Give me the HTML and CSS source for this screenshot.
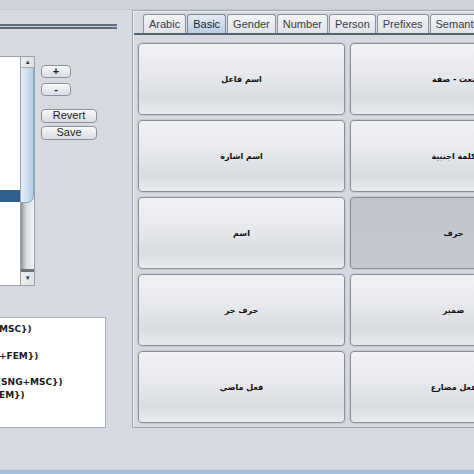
FILE: index.html
```html
<!DOCTYPE html>
<html>
<head>
<meta charset="utf-8">
<link rel="stylesheet" href="styles.css">
</head>
<body>
<div class="window">
  <div class="topband"></div>
  <div class="main">
    <div class="left">
      <div class="sep"></div>
      <div class="listrow">
        <div class="listbox">
          <div class="items"><div class="sel"></div></div>
          <div class="scroll">
            <div class="arrow up">&#9650;</div>
            <div class="thumb"></div>
            <div class="track"></div>
            <div class="arrow down">&#9660;</div>
          </div>
        </div>
        <div class="btncol">
          <div class="sbtn small">+</div>
          <div class="sbtn small gap1">-</div>
          <div class="sbtn wide gap2">Revert</div>
          <div class="sbtn wide gap3">Save</div>
        </div>
      </div>
      <div class="textarea">
        <div class="tline">MSC})</div>
        <div class="tline"></div>
        <div class="tline">+FEM})</div>
        <div class="tline"></div>
        <div class="tline shift">(SNG+MSC})</div>
        <div class="tline">EM})</div>
      </div>
    </div>
    <div class="frame">
      <div class="tabs">
        <div class="tab">Arabic</div>
        <div class="tab active">Basic</div>
        <div class="tab">Gender</div>
        <div class="tab">Number</div>
        <div class="tab">Person</div>
        <div class="tab">Prefixes</div>
        <div class="tab">Semantic</div>
      </div>
      <div class="tabline"></div>
      <div class="grid">
        <div class="key">اسم فاعل</div>
        <div class="key">نعت - صفة</div>
        <div class="key">اسم اشارة</div>
        <div class="key">كلمة اجنبية</div>
        <div class="key">اسم</div>
        <div class="key pressed">حرف</div>
        <div class="key">حرف جر</div>
        <div class="key">ضمير</div>
        <div class="key">فعل ماضي</div>
        <div class="key">فعل مضارع</div>
      </div>
    </div>
  </div>
  <div class="statusbar"></div>
</div>
</body>
</html>
```
FILE: styles.css
```css
html, body {
  margin: 0;
  padding: 0;
}
body {
  width: 474px;
  height: 474px;
  overflow: hidden;
  background: #d6d9e0;
  font-family: "Liberation Sans", Arial, sans-serif;
}
.window {
  display: flex;
  flex-direction: column;
  height: 474px;
}
.topband {
  height: 9px;
  flex: none;
  background: #cdd1d8;
  border-bottom: 1px solid #c5c9d0;
}
.main {
  flex: 1;
  min-height: 0;
  display: flex;
}
.statusbar {
  flex: none;
  height: 4px;
  background: #a8c1d9;
  border-top: 1px solid #c4d5e5;
}
.left {
  flex: none;
  width: 132px;
  display: flex;
  flex-direction: column;
}
.sep {
  margin-top: 14px;
  width: 117px;
  height: 1px;
  border-top: 2px solid #5f6b7a;
  border-bottom: 2px solid #5f6b7a;
  background: #c9ced6;
}
.listrow {
  margin-top: 27px;
  display: flex;
  height: 230px;
}
.listbox {
  width: 35px;
  display: flex;
  background: #ffffff;
  border: 1px solid #9ba1a9;
  border-left: none;
  box-sizing: border-box;
}
.items {
  width: 21px;
  padding-top: 133px;
}
.sel {
  height: 12px;
  background: #2e5f8d;
}
.scroll {
  width: 13px;
  display: flex;
  flex-direction: column;
  border-left: 1px solid #9ba1a9;
  background: linear-gradient(to right, #8e9297, #d9dbde 40%, #f4f5f6);
}
.arrow {
  font-size: 6px;
  color: #333;
  text-align: center;
  background: linear-gradient(to right, #eceef0, #dfe2e6);
}
.arrow.up {
  height: 10px;
  line-height: 10px;
  border-bottom: 1px solid #a5abb2;
}
.arrow.down {
  height: 13px;
  line-height: 13px;
  border-top: 3px solid #6d7278;
}
.thumb {
  height: 135px;
  background: linear-gradient(to right, #e4eef7, #c9ddee 60%, #b3cde3);
  border: 1px solid #8ea8bd;
  border-left: none;
  border-top: none;
  border-radius: 0 0 7px 0;
  box-sizing: border-box;
}
.track {
  flex: 1;
}
.btncol {
  margin-left: 6px;
  margin-top: 9px;
  display: flex;
  flex-direction: column;
}
.sbtn {
  box-sizing: border-box;
  border: 1px solid #8d929a;
  border-radius: 4px;
  background: linear-gradient(#fbfbfc, #e6e8ec 55%, #d9dce1);
  font-size: 11px;
  color: #1e1e1e;
  text-align: center;
  line-height: 11px;
}
.sbtn.small {
  width: 30px;
  height: 13px;
  font-weight: bold;
}
.sbtn.wide {
  width: 56px;
  height: 14px;
}
.gap1 { margin-top: 5px; }
.gap2 { margin-top: 13px; }
.gap3 { margin-top: 3px; }
.textarea {
  margin-top: 31px;
  width: 106px;
  height: 111px;
  box-sizing: border-box;
  background: #ffffff;
  border: 1px solid #a8aeb5;
  border-left: none;
  padding-top: 5px;
  overflow: hidden;
}
.tline {
  height: 13.3px;
  line-height: 13px;
  font-family: "DejaVu Sans", sans-serif;
  font-weight: bold;
  font-size: 9px;
  color: #1a1a1a;
  white-space: nowrap;
  margin-left: -1px;
}
.tline.shift {
  margin-left: -3px;
}
.frame {
  flex: none;
  width: 400px;
  margin-bottom: 41px;
  border: 1px solid #a2a7ae;
  box-shadow: inset 1px 1px 0 #eceef1;
  padding-top: 3px;
  box-sizing: border-box;
  display: flex;
  flex-direction: column;
}
.tabs {
  display: flex;
  height: 19px;
  padding-left: 10px;
}
.tab {
  flex: none;
  box-sizing: border-box;
  height: 19px;
  padding: 0 5px;
  margin-right: 1px;
  border: 1px solid #8c929a;
  border-bottom: none;
  border-radius: 3px 3px 0 0;
  background: linear-gradient(#f3f4f6, #e0e3e8);
  font-size: 11px;
  line-height: 18px;
  color: #3a3d42;
  white-space: nowrap;
}
.tab.active {
  background: linear-gradient(#e3ebf2, #b8cfe1);
  border-color: #7e8b98;
  color: #1c2430;
}
.tabline {
  height: 2px;
  margin-left: 1px;
  background: #56626f;
}
.grid {
  display: grid;
  grid-template-columns: 207px 207px;
  grid-auto-rows: 72px;
  gap: 5px;
  padding: 8px 0 0 5px;
}
.key {
  box-sizing: border-box;
  border: 1px solid #8c9199;
  border-radius: 4px;
  box-shadow: 0 0 0 1px #c6cad0;
  background: linear-gradient(#f1f2f4, #e6e8ec 45%, #d9dce1 78%, #e9ebee);
  display: flex;
  align-items: center;
  justify-content: center;
  direction: rtl;
  font-family: "DejaVu Sans", sans-serif;
  font-weight: bold;
  font-size: 8px;
  color: #111111;
}
.key.pressed {
  background: linear-gradient(#c2c5cb, #c6c9cf);
}
```
